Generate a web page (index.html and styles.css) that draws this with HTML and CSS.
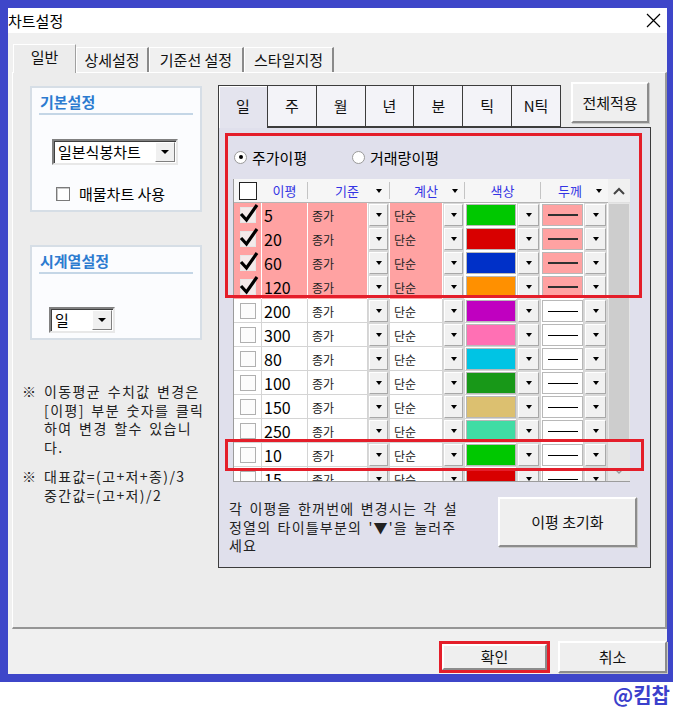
FILE: index.html
```html
<!DOCTYPE html>
<html>
<head>
  <meta charset="utf-8">
  <title>차트설정</title>
  <link rel="stylesheet" href="styles.css">
</head>
<body>
  <div class="frame">
    <div class="window">
      <div class="titlebar">
        <span class="title">차트설정</span>
        <svg class="close" width="15" height="15" viewBox="0 0 15 15"><path d="M1 1L14 14M14 1L1 14" stroke="#000" stroke-width="1.2" fill="none"/></svg>
      </div>
      <div class="dialog">
        <div class="tabs">
          <div class="tab active">일반</div>
          <div class="tab">상세설정</div>
          <div class="tab">기준선 설정</div>
          <div class="tab">스타일지정</div>
        </div>
        <div class="page">
          <div class="leftcol">
            <div class="group g1">
              <div class="group-title">기본설정</div>
              <div class="combo wide"><span class="combo-text">일본식봉차트</span><span class="combo-btn"><i class="tri"></i></span></div>
              <div class="check"><span class="box"></span>매물차트 사용</div>
            </div>
            <div class="group g2">
              <div class="group-title">시계열설정</div>
              <div class="combo narrow"><span class="combo-text">일</span><span class="combo-btn"><i class="tri"></i></span></div>
            </div>
            <div class="note first">
              <span class="mark">※</span>
              <span>이동평균 수치값 변경은<br>[이평] 부분 숫자를 클릭<br>하여 변경 할수 있습니<br>다.</span>
            </div>
            <div class="note">
              <span class="mark">※</span>
              <span>대표값=(고+저+종)/3<br>중간값=(고+저)/2</span>
            </div>
          </div>

          <div class="rightcol">
            <div class="subtabs-row">
              <div class="subtabs">
                <div class="subtab active">일</div>
                <div class="subtab">주</div>
                <div class="subtab">월</div>
                <div class="subtab">년</div>
                <div class="subtab">분</div>
                <div class="subtab">틱</div>
                <div class="subtab">N틱</div>
              </div>
              <div class="btn apply">전체적용</div>
            </div>

            <div class="subpage">
              <div class="radios">
                <div class="radio on"><span class="dot"></span>주가이평</div>
                <div class="radio"><span class="dot"></span>거래량이평</div>
              </div>

              <div class="grid">
                <div class="rows">
                  <div class="hrow">
                    <div class="hcell hchk"><span class="hbox"></span></div>
                    <div class="hcell">이평</div>
                    <div class="hcell drop">기준<i class="tri"></i></div>
                    <div class="hcell drop">계산<i class="tri"></i></div>
                    <div class="hcell">색상</div>
                    <div class="hcell drop">두께<i class="tri"></i></div>
                  </div>

                  <div class="row pink">
                    <div class="cell chk"><span class="box"></span><svg class="tick" width="20" height="20" viewBox="0 0 20 20"><path d="M2 11L7.5 17L18 2" stroke="#000" stroke-width="3.2" fill="none"/></svg></div>
                    <div class="cell num">5</div>
                    <div class="cell txt">종가</div><div class="cell dd"><span class="ddb"><i class="tri"></i></span></div>
                    <div class="cell txt">단순</div><div class="cell dd"><span class="ddb"><i class="tri"></i></span></div>
                    <div class="cell clr"><span class="sw green"></span></div><div class="cell dd"><span class="ddb"><i class="tri"></i></span></div>
                    <div class="cell ln"><span class="lnbox"><i></i></span></div><div class="cell dd"><span class="ddb"><i class="tri"></i></span></div>
                  </div>
                  <div class="row pink">
                    <div class="cell chk"><span class="box"></span><svg class="tick" width="20" height="20" viewBox="0 0 20 20"><path d="M2 11L7.5 17L18 2" stroke="#000" stroke-width="3.2" fill="none"/></svg></div>
                    <div class="cell num">20</div>
                    <div class="cell txt">종가</div><div class="cell dd"><span class="ddb"><i class="tri"></i></span></div>
                    <div class="cell txt">단순</div><div class="cell dd"><span class="ddb"><i class="tri"></i></span></div>
                    <div class="cell clr"><span class="sw red"></span></div><div class="cell dd"><span class="ddb"><i class="tri"></i></span></div>
                    <div class="cell ln"><span class="lnbox"><i></i></span></div><div class="cell dd"><span class="ddb"><i class="tri"></i></span></div>
                  </div>
                  <div class="row pink">
                    <div class="cell chk"><span class="box"></span><svg class="tick" width="20" height="20" viewBox="0 0 20 20"><path d="M2 11L7.5 17L18 2" stroke="#000" stroke-width="3.2" fill="none"/></svg></div>
                    <div class="cell num">60</div>
                    <div class="cell txt">종가</div><div class="cell dd"><span class="ddb"><i class="tri"></i></span></div>
                    <div class="cell txt">단순</div><div class="cell dd"><span class="ddb"><i class="tri"></i></span></div>
                    <div class="cell clr"><span class="sw blue"></span></div><div class="cell dd"><span class="ddb"><i class="tri"></i></span></div>
                    <div class="cell ln"><span class="lnbox"><i></i></span></div><div class="cell dd"><span class="ddb"><i class="tri"></i></span></div>
                  </div>
                  <div class="row pink">
                    <div class="cell chk"><span class="box"></span><svg class="tick" width="20" height="20" viewBox="0 0 20 20"><path d="M2 11L7.5 17L18 2" stroke="#000" stroke-width="3.2" fill="none"/></svg></div>
                    <div class="cell num">120</div>
                    <div class="cell txt">종가</div><div class="cell dd"><span class="ddb"><i class="tri"></i></span></div>
                    <div class="cell txt">단순</div><div class="cell dd"><span class="ddb"><i class="tri"></i></span></div>
                    <div class="cell clr"><span class="sw orange"></span></div><div class="cell dd"><span class="ddb"><i class="tri"></i></span></div>
                    <div class="cell ln"><span class="lnbox"><i></i></span></div><div class="cell dd"><span class="ddb"><i class="tri"></i></span></div>
                  </div>
                  <div class="row">
                    <div class="cell chk"><span class="box"></span></div>
                    <div class="cell num">200</div>
                    <div class="cell txt">종가</div><div class="cell dd"><span class="ddb"><i class="tri"></i></span></div>
                    <div class="cell txt">단순</div><div class="cell dd"><span class="ddb"><i class="tri"></i></span></div>
                    <div class="cell clr"><span class="sw purple"></span></div><div class="cell dd"><span class="ddb"><i class="tri"></i></span></div>
                    <div class="cell ln"><span class="lnbox"><i></i></span></div><div class="cell dd"><span class="ddb"><i class="tri"></i></span></div>
                  </div>
                  <div class="row">
                    <div class="cell chk"><span class="box"></span></div>
                    <div class="cell num">300</div>
                    <div class="cell txt">종가</div><div class="cell dd"><span class="ddb"><i class="tri"></i></span></div>
                    <div class="cell txt">단순</div><div class="cell dd"><span class="ddb"><i class="tri"></i></span></div>
                    <div class="cell clr"><span class="sw pinkc"></span></div><div class="cell dd"><span class="ddb"><i class="tri"></i></span></div>
                    <div class="cell ln"><span class="lnbox"><i></i></span></div><div class="cell dd"><span class="ddb"><i class="tri"></i></span></div>
                  </div>
                  <div class="row">
                    <div class="cell chk"><span class="box"></span></div>
                    <div class="cell num">80</div>
                    <div class="cell txt">종가</div><div class="cell dd"><span class="ddb"><i class="tri"></i></span></div>
                    <div class="cell txt">단순</div><div class="cell dd"><span class="ddb"><i class="tri"></i></span></div>
                    <div class="cell clr"><span class="sw cyan"></span></div><div class="cell dd"><span class="ddb"><i class="tri"></i></span></div>
                    <div class="cell ln"><span class="lnbox"><i></i></span></div><div class="cell dd"><span class="ddb"><i class="tri"></i></span></div>
                  </div>
                  <div class="row">
                    <div class="cell chk"><span class="box"></span></div>
                    <div class="cell num">100</div>
                    <div class="cell txt">종가</div><div class="cell dd"><span class="ddb"><i class="tri"></i></span></div>
                    <div class="cell txt">단순</div><div class="cell dd"><span class="ddb"><i class="tri"></i></span></div>
                    <div class="cell clr"><span class="sw dgreen"></span></div><div class="cell dd"><span class="ddb"><i class="tri"></i></span></div>
                    <div class="cell ln"><span class="lnbox"><i></i></span></div><div class="cell dd"><span class="ddb"><i class="tri"></i></span></div>
                  </div>
                  <div class="row">
                    <div class="cell chk"><span class="box"></span></div>
                    <div class="cell num">150</div>
                    <div class="cell txt">종가</div><div class="cell dd"><span class="ddb"><i class="tri"></i></span></div>
                    <div class="cell txt">단순</div><div class="cell dd"><span class="ddb"><i class="tri"></i></span></div>
                    <div class="cell clr"><span class="sw tan"></span></div><div class="cell dd"><span class="ddb"><i class="tri"></i></span></div>
                    <div class="cell ln"><span class="lnbox"><i></i></span></div><div class="cell dd"><span class="ddb"><i class="tri"></i></span></div>
                  </div>
                  <div class="row">
                    <div class="cell chk"><span class="box"></span></div>
                    <div class="cell num">250</div>
                    <div class="cell txt">종가</div><div class="cell dd"><span class="ddb"><i class="tri"></i></span></div>
                    <div class="cell txt">단순</div><div class="cell dd"><span class="ddb"><i class="tri"></i></span></div>
                    <div class="cell clr"><span class="sw mint"></span></div><div class="cell dd"><span class="ddb"><i class="tri"></i></span></div>
                    <div class="cell ln"><span class="lnbox"><i></i></span></div><div class="cell dd"><span class="ddb"><i class="tri"></i></span></div>
                  </div>
                  <div class="row">
                    <div class="cell chk"><span class="box"></span></div>
                    <div class="cell num">10</div>
                    <div class="cell txt">종가</div><div class="cell dd"><span class="ddb"><i class="tri"></i></span></div>
                    <div class="cell txt">단순</div><div class="cell dd"><span class="ddb"><i class="tri"></i></span></div>
                    <div class="cell clr"><span class="sw green"></span></div><div class="cell dd"><span class="ddb"><i class="tri"></i></span></div>
                    <div class="cell ln"><span class="lnbox"><i></i></span></div><div class="cell dd"><span class="ddb"><i class="tri"></i></span></div>
                  </div>
                  <div class="row">
                    <div class="cell chk"><span class="box"></span></div>
                    <div class="cell num">15</div>
                    <div class="cell txt">종가</div><div class="cell dd"><span class="ddb"><i class="tri"></i></span></div>
                    <div class="cell txt">단순</div><div class="cell dd"><span class="ddb"><i class="tri"></i></span></div>
                    <div class="cell clr"><span class="sw red"></span></div><div class="cell dd"><span class="ddb"><i class="tri"></i></span></div>
                    <div class="cell ln"><span class="lnbox"><i></i></span></div><div class="cell dd"><span class="ddb"><i class="tri"></i></span></div>
                  </div>
                </div>
                <div class="scroll">
                  <div class="sc-up"><svg width="12" height="8" viewBox="0 0 12 8"><path d="M1 7L6 2L11 7" stroke="#444" stroke-width="2" fill="none"/></svg></div>
                  <div class="sc-thumb"></div>
                  <div class="sc-track"></div>
                  <div class="sc-down"><svg width="10" height="6" viewBox="0 0 10 6"><path d="M1 1L5 5L9 1" stroke="#999" stroke-width="1.3" fill="none"/></svg></div>
                </div>
              </div>

              <div class="bottom">
                <p class="hint">각 이평을 한꺼번에 변경시는 각 설<br>정열의 타이틀부분의 '▼'을 눌러주<br>세요</p>
                <div class="btn reset">이평 초기화</div>
              </div>

              <div class="redmark m1"></div>
              <div class="redmark m2"></div>
            </div>
          </div>
        </div>
        <div class="footer">
          <div class="okwrap"><div class="btn ok">확인</div></div>
          <div class="btn cancel">취소</div>
        </div>
      </div>
    </div>
  </div>
  <div class="sign">@킴찹</div>
</body>
</html>
```

FILE: styles.css
```css
* {
  box-sizing: border-box;
}

html, body {
  margin: 0;
  padding: 0;
  background: #fff;
}

body {
  width: 673px;
  height: 710px;
  overflow: hidden;
  font-family: "Noto Sans CJK KR", "Noto Sans", sans-serif;
  font-size: 14px;
  color: #000;
}

.frame {
  background: #3e46c9;
  padding: 8px 6px 8px 8px;
  height: 682px;
}

.window {
  width: 659px;
  height: 666px;
  display: flex;
  flex-direction: column;
}

.titlebar {
  height: 25px;
  background: #fff;
  display: flex;
  align-items: center;
  justify-content: space-between;
  padding-right: 6px;
}
.title {
  font-size: 15px;
  line-height: 25px;
}

.dialog {
  flex: 1;
  background: #f0f0f0;
  display: flex;
  flex-direction: column;
  padding: 11px 0 0 4px;
}

/* outer tabs */
.tabs {
  display: grid;
  grid-template-columns: 63px 73px 95px 90px;
  align-items: end;
  height: 28px;
  padding-left: 1px;
}
.tab {
  height: 25px;
  font-size: 15px;
  line-height: 24px;
  text-align: center;
  border-left: 1px solid #fff;
  border-top: 1px solid #fff;
  border-right: 2px solid #8a8a8a;
  background: #f0f0f0;
  color: #111;
}
.tab.active {
  height: 29px;
  margin-bottom: -1px;
  border-right: 1px solid #a0a0a0;
  background: #ececec;
  position: relative;
  z-index: 1;
}

.page {
  width: 655px;
  height: 557px;
  background: #ececec;
  border-top: 1px solid #fff;
  border-left: 1px solid #fff;
  border-right: 2px solid #9a9a9a;
  border-bottom: 2px solid #959595;
  display: flex;
  padding: 12px 0 0 9px;
}

/* left column */
.leftcol {
  width: 182px;
  margin-right: 14px;
}

.group {
  margin-left: 8px;
  width: 172px;
  background: #fbfcfe;
  border: 2px solid #d6dee6;
}
.g1 {
  margin-top: 1px;
  height: 126px;
}
.g2 {
  margin-top: 33px;
  height: 95px;
}
.group-title {
  height: 27px;
  margin: 0 7px;
  padding: 3px 0 0 1px;
  line-height: 22px;
  font-size: 15px;
  font-weight: bold;
  color: #2c7bd0;
  border-bottom: 2px solid #c4d6e6;
}

.combo {
  display: flex;
  height: 26px;
  background: #fff;
  border: 2px solid;
  border-color: #808080 #e8e8e8 #e8e8e8 #808080;
  box-shadow: inset 1px 1px 0 #404040;
}
.combo.wide {
  width: 126px;
  margin: 24px 0 0 20px;
}
.combo.narrow {
  width: 66px;
  margin: 33px 0 0 17px;
}
.combo-text {
  flex: 1;
  font-size: 15px;
  line-height: 21px;
  padding-left: 4px;
}
.combo-btn {
  width: 20px;
  margin: 1px 1px 1px 0;
  background: #f0f0f0;
  border-left: 1px solid #fff;
  border-top: 1px solid #fff;
  border-right: 1px solid #808080;
  border-bottom: 1px solid #808080;
  display: flex;
  align-items: center;
  justify-content: center;
}

.tri {
  display: inline-block;
  width: 0;
  height: 0;
  border-left: 4px solid transparent;
  border-right: 4px solid transparent;
  border-top: 4px solid #000;
}

.check {
  display: flex;
  align-items: center;
  margin: 18px 0 0 24px;
  font-size: 15px;
  gap: 9px;
}
.check .box {
  width: 14px;
  height: 14px;
  background: #fff;
  border: 1px solid #7a7a7a;
  box-shadow: inset 1px 1px 0 #c8c8c8;
}

.note {
  display: flex;
  margin-top: 11px;
  font-size: 14px;
  line-height: 18.5px;
  color: #222;
  letter-spacing: 1.4px;
  word-spacing: 2px;
  white-space: nowrap;
}
.note.first {
  margin-top: 42px;
}
.note .mark {
  width: 22px;
  flex: none;
  letter-spacing: 0;
}

/* right column */
.rightcol {
  width: 433px;
}
.subtabs-row {
  display: flex;
  height: 42px;
}
.subtabs {
  display: flex;
  width: 342px;
}
.subtab {
  flex: 1;
  height: 42px;
  background: #f3f3f8;
  border: 1px solid #3c3c3c;
  margin-right: -1px;
  font-size: 15px;
  line-height: 40px;
  text-align: center;
  color: #111;
}
.subtab.active {
  background: #e4e4ee;
  border-bottom: none;
  height: 43px;
  position: relative;
  z-index: 1;
  box-shadow: inset 1px 1px 0 #fff;
}

.btn {
  background: #efefef;
  border: 2px solid;
  border-color: #fff #8c8c8c #8c8c8c #fff;
  box-shadow: 1px 1px 0 #c8c8c8;
  font-size: 15px;
  text-align: center;
  color: #111;
}
.apply {
  width: 78px;
  height: 41px;
  margin: -3px 0 0 11px;
  line-height: 37px;
}

.subpage {
  position: relative;
  width: 433px;
  height: 441px;
  background: #e0e0ec;
  border: 1px solid #3c3c3c;
}

.radios {
  display: flex;
  margin: 21px 0 0 15px;
  height: 16px;
  align-items: center;
  font-size: 15px;
}
.radio {
  display: flex;
  align-items: center;
  gap: 5px;
  width: 118px;
}
.radio .dot {
  width: 13px;
  height: 13px;
  border-radius: 50%;
  background: #fff;
  border: 1px solid #9a9a9a;
  display: flex;
  align-items: center;
  justify-content: center;
}
.radio.on .dot::after {
  content: "";
  width: 4px;
  height: 4px;
  border-radius: 50%;
  background: #000;
}

/* grid */
.grid {
  display: flex;
  width: 397px;
  height: 303px;
  margin: 14px 0 0 14px;
  background: #fff;
  border-left: 1px solid #9c9c9c;
  border-bottom: 1px solid #9c9c9c;
}
.rows {
  width: 374px;
  overflow: hidden;
}
.hrow, .row {
  display: grid;
  grid-template-columns: 28px 46px 60px 22px 53px 22px 52px 24px 43px 24px;
  height: 24px;
}
.hrow {
  background: #f6f6f6;
  border-bottom: 1px solid #b4b4b4;
}
.hcell {
  margin: 3px 0;
  border-right: 1px solid #c4c4c4;
  font-size: 13px;
  line-height: 17px;
  color: #3434e4;
  text-align: center;
}
.hrow .hcell:nth-child(3) { grid-column: span 2; }
.hrow .hcell:nth-child(4) { grid-column: span 2; }
.hrow .hcell:nth-child(5) { grid-column: span 2; }
.hrow .hcell:nth-child(6) { grid-column: span 2; }
.hcell.drop {
  display: flex;
  align-items: center;
  justify-content: flex-end;
  padding-right: 6px;
  gap: 14px;
}
.hcell.drop .tri {
  border-left-width: 3.5px;
  border-right-width: 3.5px;
}
.hcell:nth-child(3) { padding-right: 7px; gap: 17px; }
.hcell:nth-child(6) { border-right: none; }
.hcell.hchk {
  border-right: none;
  margin: 0;
  display: flex;
  align-items: center;
  justify-content: center;
}
.hbox {
  width: 18px;
  height: 18px;
  background: #fff;
  border: 1px solid #222;
}

.row {
  border-bottom: 1px solid #d4d4d4;
  background: #fff;
}
.row .cell {
  border-right: 1px solid #d4d4d4;
  display: flex;
  align-items: center;
}
.row.pink {
  border-bottom-color: #fff;
}
.row.pink .cell {
  background: #ffa2a2;
  border-right-color: #fff;
}
.row.pink .cell.dd,
.row.pink .cell.clr {
  background: #fff;
}

.cell.chk {
  justify-content: center;
  position: relative;
}
.cell .box {
  width: 16px;
  height: 16px;
  background: #fcfcfc;
  border: 1px solid #b0b0b0;
}
.row.pink .cell .box {
  background: #f4eaea;
  border-color: #e6e6e6;
}
.tick {
  position: absolute;
  left: 5px;
  top: 0;
}

.cell.num {
  font-size: 16px;
  padding-left: 2px;
}
.cell.txt {
  font-size: 12px;
  padding-left: 4px;
  color: #222;
}
.cell.dd {
  padding: 1px;
}
.ddb {
  width: 100%;
  height: 100%;
  background: #f1f1f1;
  border: 1px solid;
  border-color: #fff #a8a8a8 #a8a8a8 #fff;
  box-shadow: 0 0 0 1px #d8d8d8;
  display: flex;
  align-items: center;
  justify-content: center;
}
.ddb .tri {
  border-left-width: 3.5px;
  border-right-width: 3.5px;
}
.cell.clr {
  padding: 1px 0 1px 1px;
}
.sw {
  width: 100%;
  height: 100%;
  border: 1px solid #b8b8b8;
}
.sw.green { background: #00c800; }
.sw.red { background: #d80000; }
.sw.blue { background: #0030c8; }
.sw.orange { background: #ff9000; }
.sw.purple { background: #c000c0; }
.sw.pinkc { background: #ff70b4; }
.sw.cyan { background: #00c4e4; }
.sw.dgreen { background: #189818; }
.sw.tan { background: #dcc070; }
.sw.mint { background: #40dca4; }

.cell.ln {
  padding: 1px 0 1px 1px;
  background: #fff;
}
.lnbox {
  width: 100%;
  height: 100%;
  border: 1px solid #b8b8b8;
  display: flex;
  align-items: center;
  justify-content: center;
}
.lnbox i {
  width: 30px;
  height: 1px;
  background: #000;
}
.row.pink .cell.ln {
  background: #fff;
}
.row.pink .lnbox {
  background: #ffa2a2;
}
.row.pink .lnbox i {
  height: 2px;
  background: #303030;
}

.scroll {
  width: 22px;
  display: flex;
  flex-direction: column;
  background: #e6e6e6;
}
.sc-up {
  height: 24px;
  background: #f0f0f0;
  border-bottom: 1px solid #e0e0e0;
  display: flex;
  align-items: center;
  justify-content: center;
}
.sc-thumb {
  height: 236px;
  margin: 1px 1px 0;
  background: #cdcdcd;
}
.sc-track {
  flex: 1;
}
.sc-down {
  height: 20px;
  display: flex;
  align-items: center;
  justify-content: center;
}

.bottom {
  display: flex;
  margin: 15px 0 0 10px;
}
.hint {
  margin: 2px 0 0;
  width: 269px;
  font-size: 14px;
  line-height: 18.5px;
  color: #222;
  letter-spacing: 1.2px;
  word-spacing: 2px;
  white-space: nowrap;
}
.reset {
  width: 139px;
  height: 50px;
  line-height: 46px;
}

.redmark {
  position: absolute;
  border: 3px solid #e41e2a;
}
.redmark.m1 {
  left: 6px;
  top: 5px;
  width: 417px;
  height: 165px;
}
.redmark.m2 {
  left: 6px;
  top: 311px;
  width: 419px;
  height: 32px;
}

/* dialog buttons */
.footer {
  display: flex;
  justify-content: flex-end;
  margin-top: 12px;
  gap: 8px;
}
.okwrap {
  width: 111px;
  height: 32px;
  border: 3px solid #e41e2a;
}
.ok {
  height: 100%;
  line-height: 22px;
  box-shadow: none;
}
.cancel {
  width: 109px;
  height: 32px;
  line-height: 28px;
}

.sign {
  height: 28px;
  line-height: 26px;
  text-align: right;
  padding-right: 3px;
  font-size: 20px;
  font-weight: bold;
  color: #3b40cc;
}
```
